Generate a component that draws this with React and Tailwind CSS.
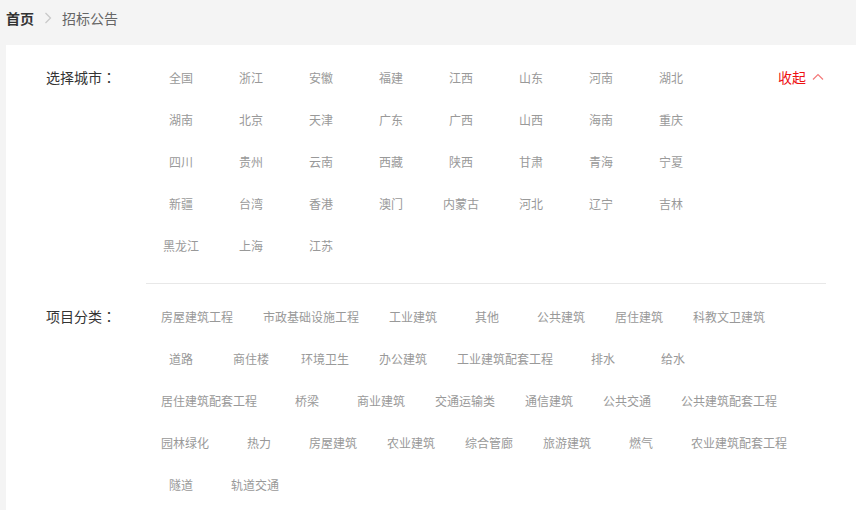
import React from 'react';

const cities = [
  '全国', '浙江', '安徽', '福建', '江西', '山东', '河南', '湖北',
  '湖南', '北京', '天津', '广东', '广西', '山西', '海南', '重庆',
  '四川', '贵州', '云南', '西藏', '陕西', '甘肃', '青海', '宁夏',
  '新疆', '台湾', '香港', '澳门', '内蒙古', '河北', '辽宁', '吉林',
  '黑龙江', '上海', '江苏',
];

const categories = [
  '房屋建筑工程', '市政基础设施工程', '工业建筑', '其他', '公共建筑', '居住建筑', '科教文卫建筑',
  '道路', '商住楼', '环境卫生', '办公建筑', '工业建筑配套工程', '排水', '给水',
  '居住建筑配套工程', '桥梁', '商业建筑', '交通运输类', '通信建筑', '公共交通', '公共建筑配套工程',
  '园林绿化', '热力', '房屋建筑', '农业建筑', '综合管廊', '旅游建筑', '燃气', '农业建筑配套工程',
  '隧道', '轨道交通',
];

function Label({ children }) {
  return (
    <div className="w-[100px] shrink-0 h-[40px] leading-[40px] text-[14px] text-[#333]">
      {children}
      <span className="font-['Noto_Sans_CJK_TC',sans-serif]">：</span>
    </div>
  );
}

export default function App() {
  return (
    <div className="min-h-screen bg-[#f4f4f4] font-['Noto_Sans_CJK_SC',sans-serif]">
      {/* breadcrumb */}
      <div className="flex items-center h-[36px] pl-[6px] text-[14px]">
        <span className="font-bold text-[#333]">首页</span>
        <svg width="8" height="12" viewBox="0 0 8 12" className="ml-[10px] mr-[10px]">
          <polyline points="1.5,1 6.5,6 1.5,11" fill="none" stroke="#c8c8c8" strokeWidth="1.2" />
        </svg>
        <span className="text-[#666]">招标公告</span>
      </div>

      <div className="ml-[6px] mt-[9px] bg-white pt-[12px] pl-[40px] pr-[30px] pb-[10px]">
        {/* city */}
        <div className="flex">
          <Label>选择城市</Label>
          <div className="grid grid-cols-[repeat(8,70px)]">
            {cities.map((c) => (
              <div key={c} className="h-[42px] flex items-center justify-center text-[12px] text-[#999] cursor-pointer">
                {c}
              </div>
            ))}
          </div>
          <div className="ml-auto h-[42px] flex items-start pt-[10px] pr-[2px]">
            <span className="text-[14px] text-[#ee1111] leading-[20px]">收起</span>
            <svg width="12" height="8" viewBox="0 0 12 8" className="ml-[6px] mt-[6px]">
              <polyline points="1,6.5 6,1.5 11,6.5" fill="none" stroke="#f47a7a" strokeWidth="1.2" />
            </svg>
          </div>
        </div>

        <div className="ml-[100px] mt-[16px] border-t border-[#e8e8e8]" />

        {/* category */}
        <div className="flex pt-[12px]">
          <Label>项目分类</Label>
          <div className="flex flex-wrap flex-1">
            {categories.map((c, i) => (
              <div key={i} className="h-[42px] min-w-[70px] px-[15px] flex items-center justify-center text-[12px] text-[#999] cursor-pointer">
                {c}
              </div>
            ))}
          </div>
        </div>
      </div>
    </div>
  );
}
